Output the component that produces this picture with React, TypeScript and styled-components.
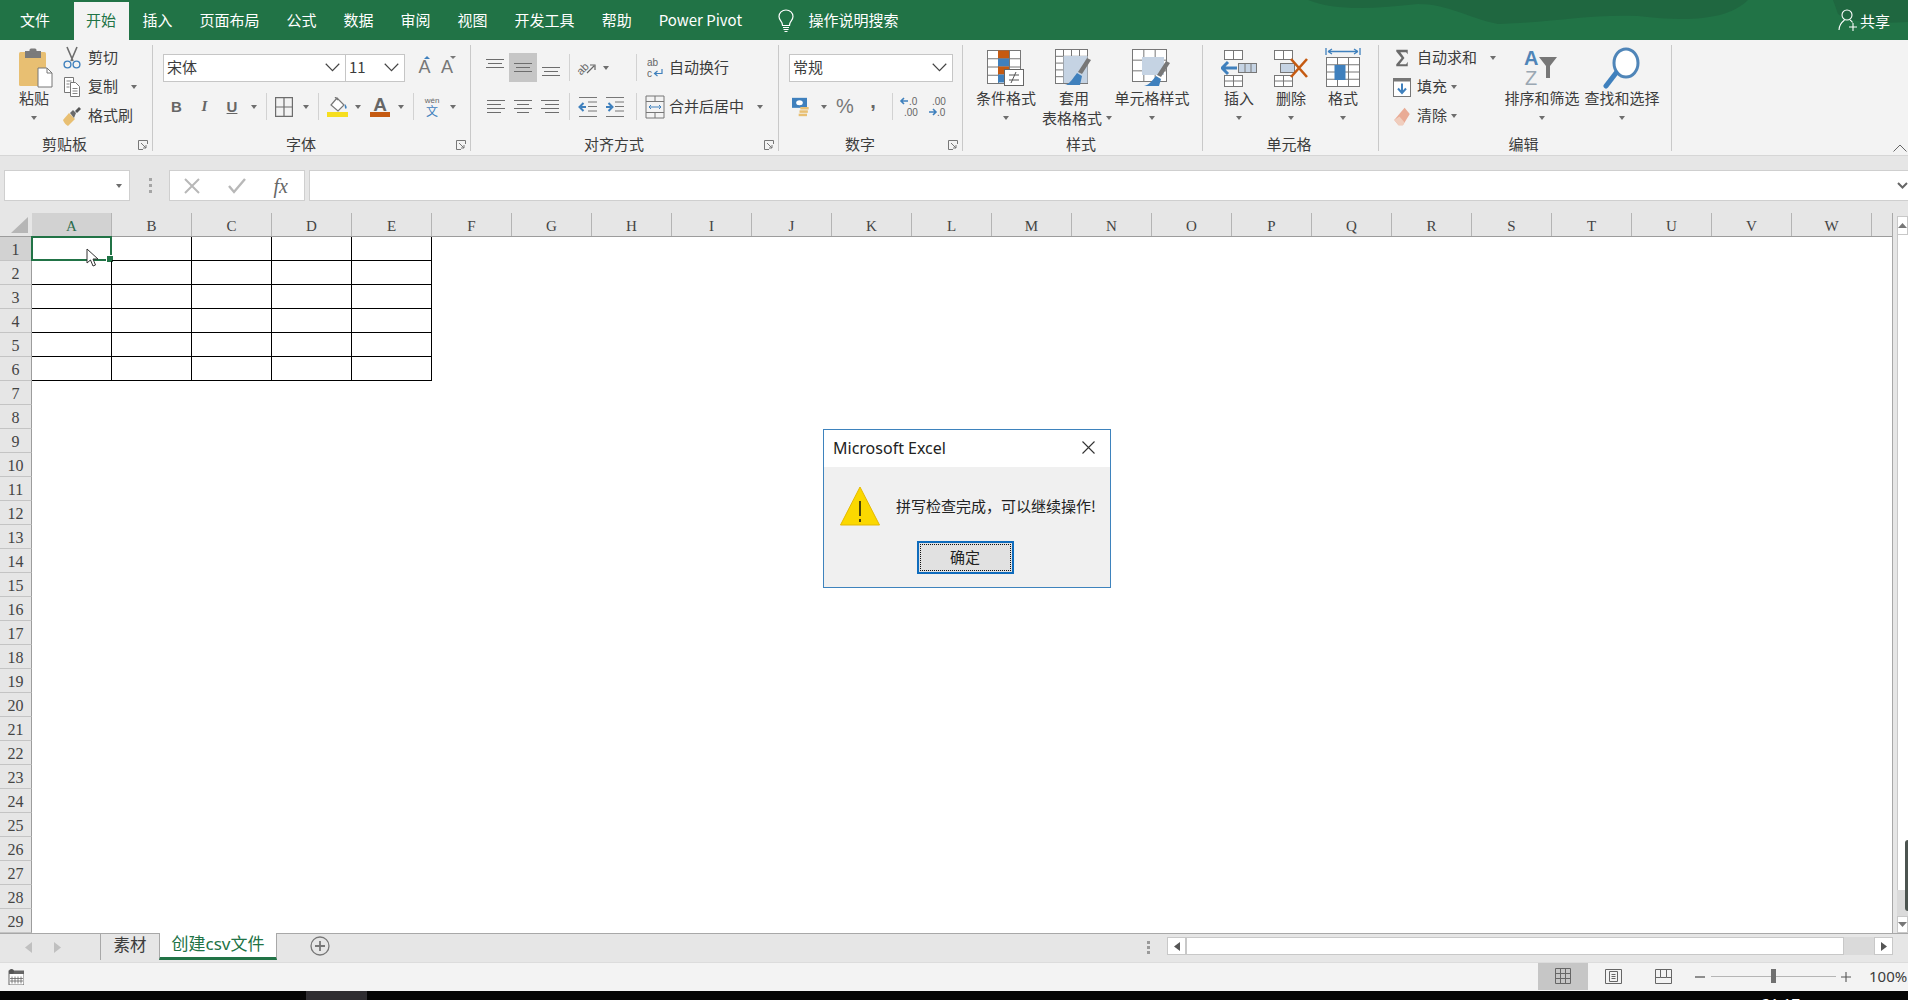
import React from "react";
import styled, { createGlobalStyle } from "styled-components";

const GlobalStyle = createGlobalStyle`
  html, body { margin: 0; padding: 0; background: #fff; }
  body { font-family: "Noto Sans", "Noto Sans CJK SC", sans-serif; overflow: hidden; }
  * { box-sizing: border-box; }
`;

const COLUMNS = "ABCDEFGHIJKLMNOPQRSTUVW".split("");
const ROWS = Array.from({ length: 29 }, (_, i) => i + 1);
const TABS = ["插入", "页面布局", "公式", "数据", "审阅", "视图", "开发工具", "帮助", "Power Pivot"];

const TitleIcon = () => (
  <svg width="20" height="26" viewBox="0 0 20 26" fill="none" stroke="#fff" strokeWidth="1.2">
    <path d="M10 3c-4 0-7 3-7 6.5 0 2.7 1.7 4 2.8 6 .5 1 .6 2 .7 3h7c.1-1 .2-2 .7-3 1.1-2 2.8-3.3 2.8-6C17 6 14 3 10 3z" />
    <path d="M7 20.5h6M7.5 22.5h5M8.5 24.5h3" />
  </svg>
);

const ClipboardIcon = () => (
  <svg width="40" height="40" viewBox="-4 0 40 40">
    <rect x="1" y="4" width="27" height="34" rx="1.5" fill="#e8bf72" />
    <rect x="7" y="3" width="16" height="7" fill="#7b7b7b" />
    <rect x="11.5" y="0.5" width="7" height="5" rx="1.5" fill="#7b7b7b" />
    <path d="M20 20h9l5 5v14H20z" fill="#fff" stroke="#777" />
    <path d="M29 20v5h5" fill="none" stroke="#777" />
  </svg>
);

const ScissorsIcon = () => (
  <svg width="18" height="24" viewBox="0 0 18 24" fill="none">
    <path d="M4 1l6 14M14 1L8 15" stroke="#6d6d6d" strokeWidth="1.6" />
    <circle cx="4.5" cy="18.5" r="3.4" stroke="#3f80bd" strokeWidth="1.4" />
    <circle cx="13.5" cy="18.5" r="3.4" stroke="#3f80bd" strokeWidth="1.4" />
  </svg>
);

const CopyIcon = () => (
  <svg width="18" height="22" viewBox="0 0 18 22" fill="#fff" stroke="#777">
    <path d="M1.5 1.5h9v15h-9z" />
    <path d="M7.5 6.5h5l4 4v10h-9z" />
    <path d="M3.5 5h5M3.5 8h3M3.5 11h3M9.5 12.5h5M9.5 15h5M9.5 17.5h5" strokeWidth=".9" />
  </svg>
);

const BrushIcon = () => (
  <svg width="20" height="20" viewBox="0 0 20 20">
    <path d="M1 14l6-7 6 6-7 7c-2-1-4-3-5-6z" fill="#e8bf72" />
    <path d="M8 7l3-3 3 3-2 5z" fill="#6a6a6a" />
    <path d="M13 5l4-4 2 2-4 4z" fill="#555" />
  </svg>
);

const GrowIcon = ({ shrink }: { shrink?: boolean }) => (
  <GrowBox>
    <FontGlyph $size={18} $light>A</FontGlyph>
    <GrowMark $shrink={shrink} />
  </GrowBox>
);

const BorderIcon = () => (
  <svg width="18" height="20" viewBox="0 0 18 20" fill="none" stroke="#6d6d6d" strokeWidth="1.2">
    <path d="M.6.6h16.8v18.8H.6zM9 .6v18.8M.6 10h16.8" />
  </svg>
);

const FillIcon = () => (
  <svg width="22" height="20" viewBox="0 0 22 20">
    <path d="M10 1l7 7-6 6-7-6z" fill="#fff" stroke="#777" strokeWidth="1.2" />
    <path d="M8 0l3 3" stroke="#777" strokeWidth="1.2" />
    <path d="M18 7c1.500 2 2.400 3.500 1 5-1.500-.5-1.500-3-1-5z" fill="#3f80bd" />
    <rect x="0" y="15" width="21" height="5" fill="#f6de1f" />
  </svg>
);

const FontColorIcon = () => (
  <ColorStack>
    <FontGlyph $size={19} $weight={700} $line={15}>A</FontGlyph>
    <ColorBar />
  </ColorStack>
);

const WenIcon = () => (
  <WenStack>
    <WenTop>wén</WenTop>
    <WenBottom>文</WenBottom>
  </WenStack>
);

const AlignLines = ({ y, widths, align }: { y: number; widths: number[]; align?: "left" | "center" | "right" }) => (
  <svg width="20" height="24" viewBox="0 0 20 24" stroke="#6d6d6d" strokeWidth="1">
    {widths.map((w, i) => {
      const x1 = align === "left" ? 2 : align === "right" ? 18 - w : 10 - w / 2;
      return <path key={i} d={`M${x1} ${y + i * 4 + 0.5}h${w}`} />;
    })}
  </svg>
);

const OrientIcon = () => (
  <svg width="24" height="24" viewBox="0 0 24 24">
    <text x="1" y="16" transform="rotate(-45 8 12)" fontFamily="Liberation Sans" fontSize="11" fill="#666">ab</text>
    <path d="M12 17l7-7M15 9h5v5" fill="none" stroke="#666" strokeWidth="1.2" />
  </svg>
);

const IndentIcon = ({ inward }: { inward?: boolean }) => (
  <svg width="20" height="22" viewBox="0 0 20 22" stroke="#777">
    <path d="M1 1.500h18M10 6h9M10 10.500h9M10 15h9M1 20.500h18" />
    <path d={inward ? "M1 11h5M3.500 7l4 4-4 4" : "M8 11H3M5.500 7l-4 4 4 4"} fill="none" stroke="#3f80bd" strokeWidth="2" />
  </svg>
);

const WrapIcon = () => (
  <svg width="16" height="22" viewBox="0 0 16 22">
    <text x="0" y="9" fontFamily="Liberation Sans" fontSize="10" fill="#666">ab</text>
    <text x="0" y="20" fontFamily="Liberation Sans" fontSize="10" fill="#666">c</text>
    <path d="M15 12v4.500H8M10.500 14l-3 2.500 3 2.500" fill="none" stroke="#3f80bd" strokeWidth="1.2" />
  </svg>
);

const MergeIcon = () => (
  <svg width="20" height="24" viewBox="0 0 20 24" fill="none" stroke="#777">
    <path d="M1 1h18v22H1zM1 6.500h18M1 17.500h18M10 1v5.500M10 17.500V23" />
    <path d="M4 12h12M6 10l-2 2 2 2M14 10l2 2-2 2" stroke="#3f80bd" />
  </svg>
);

const CurrencyIcon = () => (
  <svg width="20" height="20" viewBox="0 0 24 24">
    <rect x="0" y="1" width="18" height="12" fill="#3f80bd" />
    <ellipse cx="9" cy="7" rx="4" ry="3" fill="#fff" />
    <rect x="10" y="12" width="10" height="3" fill="#e8bf72" />
    <rect x="9" y="16" width="10" height="3" fill="#e8bf72" />
    <rect x="8" y="20" width="10" height="3" fill="#e8bf72" />
  </svg>
);

const DecimalIcon = ({ more }: { more?: boolean }) => (
  <svg width="24" height="22" viewBox="0 0 24 22" fontFamily="Liberation Sans" fontSize="10" fill="#666">
    <text x={more ? 10 : 5} y="9">{more ? ".0" : ".00"}</text>
    <text x={more ? 5 : 10} y="20">{more ? ".00" : ".0"}</text>
    <path d={more ? "M9 5H2M5 2L2 5l3 3" : "M2 16h7M6 13l3 3-3 3"} fill="none" stroke="#3f80bd" strokeWidth="1.6" />
  </svg>
);

const GridCells = ({ x, y, w, h, cols, rows }: { x: number; y: number; w: number; h: number; cols: number; rows: number }) => (
  <g fill="#fff" stroke="#777" strokeWidth="1">
    <rect x={x + 0.5} y={y + 0.5} width={w} height={h} />
    {Array.from({ length: cols - 1 }, (_, i) => (
      <path key={i} d={`M${x + 0.5 + ((i + 1) * w) / cols} ${y}v${h}`} />
    ))}
    {Array.from({ length: rows - 1 }, (_, i) => (
      <path key={i} d={`M${x} ${y + 0.5 + ((i + 1) * h) / rows}h${w}`} />
    ))}
  </g>
);

const CondFormatIcon = () => (
  <svg width="40" height="38" viewBox="0 0 40 38">
    <GridCells x={1} y={1} w={33} h={33} cols={3} rows={4} />
    <rect x="12" y="1.500" width="11" height="8" fill="#c55a11" />
    <rect x="12" y="9.500" width="11" height="8" fill="#3f80bd" />
    <rect x="12" y="17.500" width="11" height="8" fill="#c55a11" />
    <rect x="12" y="25.500" width="11" height="8" fill="#3f80bd" />
    <rect x="18.500" y="20.500" width="19" height="16" fill="#fff" stroke="#666" />
    <path d="M23 26h10M23 31h10M30 23l-5 11" stroke="#555" fill="none" />
  </svg>
);

const TableFormatIcon = () => (
  <svg width="38" height="38" viewBox="0 0 38 38">
    <GridCells x={0} y={0} w={32} h={34} cols={4} rows={5} />
    <rect x="8.500" y="7" width="24" height="27" fill="#c5d3e3" />
    <path d="M36 11L27 25l-4-2 9-14z" fill="#777" />
    <path d="M22 24l5 3-2 9H10c5-1 8-7 12-12z" fill="#3f80bd" />
  </svg>
);

const CellStyleIcon = () => (
  <svg width="40" height="38" viewBox="0 0 40 38">
    <GridCells x={0} y={0} w={34} h={32} cols={3} rows={3} />
    <rect x="10" y="8" width="22" height="18" fill="#c5d3e3" />
    <path d="M38 14l-9 14-4-2 9-14z" fill="#777" />
    <path d="M24 27l5 3-2 7H12c5-1 8-5 12-10z" fill="#3f80bd" />
  </svg>
);

const InsertIcon = () => (
  <svg width="36" height="38" viewBox="0 0 36 38">
    <GridCells x={3} y={1} w={18} h={9} cols={2} rows={1} />
    <GridCells x={3} y={26} w={18} h={11} cols={2} rows={2} />
    <rect x="17.500" y="14.500" width="18" height="9" fill="#c5d3e3" stroke="#777" />
    <path d="M24 14.500v9M30 14.500v9" stroke="#777" />
    <path d="M16 19H2M7 13l-6 6 6 6" fill="none" stroke="#3f80bd" strokeWidth="3" />
  </svg>
);

const DeleteIcon = () => (
  <svg width="36" height="38" viewBox="0 0 36 38">
    <GridCells x={1} y={1} w={18} h={9} cols={2} rows={1} />
    <GridCells x={1} y={26} w={18} h={11} cols={2} rows={2} />
    <rect x="7.500" y="14.500" width="14" height="9" fill="#c5d3e3" stroke="#777" />
    <path d="M18 10l16 18M34 10L18 28" stroke="#c55a11" strokeWidth="2.600" />
  </svg>
);

const FormatIcon = () => (
  <svg width="36" height="40" viewBox="0 0 36 40">
    <path d="M1 0v7M35 0v7M3 3.500h30M3 3.500l4-2.500M3 3.500l4 2.500M33 3.500l-4-2.500M33 3.500l-4 2.500" stroke="#3f80bd" strokeWidth="1.300" fill="none" />
    <GridCells x={1} y={9} w={33} h={29} cols={3} rows={4} />
    <rect x="9.500" y="17" width="11" height="15" fill="#3f80bd" />
  </svg>
);

const SumIcon = () => (
  <svg width="16" height="18" viewBox="0 0 16 22">
    <path d="M1 1h14v5.500L13 4H6l5 7-6 7.500h8l2-3V21H1v-2.500L7.500 11 1 3z" fill="#6a6a6a" />
  </svg>
);

const FillDownIcon = () => (
  <svg width="18" height="19" viewBox="0 0 18 19">
    <rect x=".5" y=".5" width="17" height="18" fill="#fff" stroke="#777" />
    <rect x=".5" y=".5" width="17" height="3" fill="#777" />
    <path d="M9 5.500v9M5 10.500l4 4.500 4-4.500" fill="none" stroke="#3f80bd" strokeWidth="2" />
  </svg>
);

const EraserIcon = () => (
  <svg width="18" height="19" viewBox="0 0 20 22">
    <path d="M13 1l6 7-8 13H6L1 15z" fill="#e9ab95" />
    <path d="M1 15l5 6h5l2-3-6-7z" fill="#f0cdbd" />
  </svg>
);

const SortIcon = () => (
  <svg width="38" height="42" viewBox="0 0 38 42">
    <text x="1" y="18" fontFamily="Liberation Sans" fontWeight="700" fontSize="20" fill="#4f85b8">A</text>
    <text x="2" y="38" fontFamily="Liberation Sans" fontSize="20" fill="#9aa7b2">Z</text>
    <path d="M16 10h18l-7 9v12h-4V19z" fill="#777" />
  </svg>
);

const FindIcon = () => (
  <svg width="38" height="42" viewBox="0 0 38 42">
    <ellipse cx="23" cy="16" rx="12" ry="14" fill="#fff" stroke="#4f85b8" strokeWidth="3" />
    <path d="M13 26L3 39" stroke="#3f80bd" strokeWidth="5" strokeLinecap="round" />
  </svg>
);

const Chevron = ({ size = 15 }: { size?: number }) => (
  <svg width={size} height={size / 1.7} viewBox="0 0 15 9" fill="none" stroke="#444" strokeWidth="1.200">
    <path d="M.6.8l6.900 7 6.900-7" />
  </svg>
);

const Launcher = () => (
  <LauncherBox>
    <svg width="10" height="10" viewBox="0 0 10 10" fill="none" stroke="#777">
      <path d="M9.500 4V.5H.5v9H5M3 3l5 5M8 5v3H5" />
    </svg>
  </LauncherBox>
);

const PersonIcon = () => (
  <svg width="20" height="24" viewBox="0 0 20 24" fill="none" stroke="#fff" strokeWidth="1.100">
    <circle cx="9" cy="7" r="5" />
    <path d="M1 22c0-5 3-8 5.500-10M12 12c1 .5 2 1.500 2.500 2.500M15 15v8M11 19h8" />
  </svg>
);

const DialogWarning = () => (
  <svg width="40" height="40" viewBox="0 0 40 40">
    <path d="M20 1l19.500 38H.5z" fill="#fbd800" stroke="#e4b900" />
    <path d="M20 15v15M20 33v3" stroke="#111" strokeWidth="1.500" />
  </svg>
);

const Pointer = () => (
  <svg width="14" height="20" viewBox="0 0 14 20" fill="#fff" stroke="#333">
    <path d="M1 1v14l3.500-3 2.500 6 2.500-1-2.500-6H12z" />
  </svg>
);

const App = () => {
  return (
    <Page>
      <GlobalStyle />
      <TitleBar>
        <Decor width="600" height="24" viewBox="0 0 600 24">
          <path d="M0 0c30 12 70 8 110 4 30 0 50 14 80 20 60-2 90-10 140-8 50 6 90 4 110-16zM525 0h75v22c-30 2-60 0-70-8z" fill="#1f6740" />
        </Decor>
        <FileTab>文件</FileTab>
        <ActiveTab>开始</ActiveTab>
        {TABS.map((tab) => (
          <Tab key={tab}>{tab}</Tab>
        ))}
        <SearchHint>
          <TitleIcon />
          <span>操作说明搜索</span>
        </SearchHint>
        <Share>
          <PersonIcon />
          <span>共享</span>
        </Share>
      </TitleBar>

      <Ribbon>
        <Group $w={153}>
          <GroupBody>
            <BigButton $w={42} $ml={13}>
              <BigIcon><ClipboardIcon /></BigIcon>
              <BigLabel>粘贴</BigLabel>
              <Caret />
            </BigButton>
            <SmallColumn $w={98}>
              <SmallRow><Slot $w={33}><ScissorsIcon /></Slot><RowText>剪切</RowText></SmallRow>
              <SmallRow><Slot $w={33}><CopyIcon /></Slot><RowText>复制</RowText><Slot $w={8} $ml={12}><Caret /></Slot></SmallRow>
              <SmallRow><Slot $w={33}><BrushIcon /></Slot><RowText>格式刷</RowText></SmallRow>
            </SmallColumn>
          </GroupBody>
          <GroupLabel $pr={24}>剪贴板<Launcher /></GroupLabel>
        </Group>

        <Group $w={318}>
          <StackBody $pl={10}>
            <ToolRow>
              <SelectBox $w={183}><SelectText>宋体</SelectText><Chevron /></SelectBox>
              <SelectBox $w={59} $flush><SelectText>11</SelectText><Chevron /></SelectBox>
              <Slot $w={21} $ml={9}><GrowIcon /></Slot>
              <Slot $w={22} $ml={1}><GrowIcon shrink /></Slot>
            </ToolRow>
            <ToolRow>
              <Slot $w={27}><FontGlyph $size={15} $weight={700}>B</FontGlyph></Slot>
              <Slot $w={29}><FontGlyph $size={15} $italic $serif>I</FontGlyph></Slot>
              <Slot $w={26}><FontGlyph $size={15} $underline>U</FontGlyph></Slot>
              <Slot $w={18}><Caret /></Slot>
              <Slot $w={6}><Divider /></Slot>
              <Slot $w={30}><BorderIcon /></Slot>
              <Slot $w={14}><Caret /></Slot>
              <Slot $w={10}><Divider /></Slot>
              <Slot $w={30}><FillIcon /></Slot>
              <Slot $w={10}><Caret /></Slot>
              <Slot $w={34}><FontColorIcon /></Slot>
              <Slot $w={8}><Caret /></Slot>
              <Slot $w={16}><Divider /></Slot>
              <Slot $w={22}><WenIcon /></Slot>
              <Slot $w={20}><Caret /></Slot>
            </ToolRow>
          </StackBody>
          <GroupLabel $pr={22}>字体<Launcher /></GroupLabel>
        </Group>

        <Group $w={308}>
          <StackBody $pl={10}>
            <ToolRow>
              <Slot $w={28}><AlignLines y={3} widths={[18, 14, 18]} /></Slot>
              <PressedSlot $w={28}><AlignLines y={7} widths={[18, 14, 18]} /></PressedSlot>
              <Slot $w={28}><AlignLines y={11} widths={[18, 14, 18]} /></Slot>
              <Slot $w={8}><Divider /></Slot>
              <Slot $w={28}><OrientIcon /></Slot>
              <Slot $w={10}><Caret /></Slot>
              <Slot $w={6} $ml={22}><Divider /></Slot>
              <Slot $w={20} $ml={6}><WrapIcon /></Slot>
              <RowText $ml={4}>自动换行</RowText>
            </ToolRow>
            <ToolRow>
              <Slot $w={28}><AlignLines y={5} widths={[18, 14, 18, 14]} align="left" /></Slot>
              <Slot $w={28}><AlignLines y={5} widths={[18, 12, 18, 12]} /></Slot>
              <Slot $w={28}><AlignLines y={5} widths={[18, 14, 18, 14]} align="right" /></Slot>
              <Slot $w={8}><Divider /></Slot>
              <Slot $w={30}><IndentIcon /></Slot>
              <Slot $w={24}><IndentIcon inward /></Slot>
              <Slot $w={6} $ml={6}><Divider /></Slot>
              <Slot $w={20} $ml={6}><MergeIcon /></Slot>
              <RowText $ml={4}>合并后居中</RowText>
              <Slot $w={8} $ml={12}><Caret /></Slot>
            </ToolRow>
          </StackBody>
          <GroupLabel $pr={22}>对齐方式<Launcher /></GroupLabel>
        </Group>

        <Group $w={184}>
          <StackBody $pl={10}>
            <ToolRow>
              <SelectBox $w={164}><SelectText>常规</SelectText><Chevron /></SelectBox>
            </ToolRow>
            <ToolRow>
              <Slot $w={26}><CurrencyIcon /></Slot>
              <Slot $w={18}><Caret /></Slot>
              <Slot $w={24}><FontGlyph $size={20} $light>%</FontGlyph></Slot>
              <Slot $w={32}><FontGlyph $size={20} $weight={700} $pb={10}>,</FontGlyph></Slot>
              <Slot $w={6}><Divider /></Slot>
              <Slot $w={32}><DecimalIcon more /></Slot>
              <Slot $w={22}><DecimalIcon /></Slot>
            </ToolRow>
          </StackBody>
          <GroupLabel $pr={22}>数字<Launcher /></GroupLabel>
        </Group>

        <Group $w={240}>
          <GroupBody>
            <BigButton $w={70} $ml={8}>
              <BigIcon><CondFormatIcon /></BigIcon>
              <BigLabel>条件格式</BigLabel>
              <Caret />
            </BigButton>
            <BigButton $w={66}>
              <BigIcon><TableFormatIcon /></BigIcon>
              <BigLabel>套用</BigLabel>
              <SecondLine>表格格式<Caret /></SecondLine>
            </BigButton>
            <BigButton $w={90}>
              <BigIcon><CellStyleIcon /></BigIcon>
              <BigLabel>单元格样式</BigLabel>
              <Caret />
            </BigButton>
          </GroupBody>
          <GroupLabel $pr={4}>样式</GroupLabel>
        </Group>

        <Group $w={176}>
          <GroupBody>
            <BigButton $w={52} $ml={10}>
              <BigIcon><InsertIcon /></BigIcon>
              <BigLabel>插入</BigLabel>
              <Caret />
            </BigButton>
            <BigButton $w={52}>
              <BigIcon><DeleteIcon /></BigIcon>
              <BigLabel>删除</BigLabel>
              <Caret />
            </BigButton>
            <BigButton $w={52}>
              <BigIcon><FormatIcon /></BigIcon>
              <BigLabel>格式</BigLabel>
              <Caret />
            </BigButton>
          </GroupBody>
          <GroupLabel $pr={4}>单元格</GroupLabel>
        </Group>

        <Group $w={293}>
          <GroupBody>
            <SmallColumn $w={125} $pl={10}>
              <SmallRow><Slot $w={26}><SumIcon /></Slot><RowText $ml={2}>自动求和</RowText><Slot $w={8} $ml={12}><Caret /></Slot></SmallRow>
              <SmallRow><Slot $w={26}><FillDownIcon /></Slot><RowText $ml={2}>填充</RowText><Slot $w={8} $ml={3}><Caret /></Slot></SmallRow>
              <SmallRow><Slot $w={26}><EraserIcon /></Slot><RowText $ml={2}>清除</RowText><Slot $w={8} $ml={3}><Caret /></Slot></SmallRow>
            </SmallColumn>
            <BigButton $w={76}>
              <BigIcon><SortIcon /></BigIcon>
              <BigLabel>排序和筛选</BigLabel>
              <Caret />
            </BigButton>
            <BigButton $w={80} $ml={2}>
              <BigIcon><FindIcon /></BigIcon>
              <BigLabel>查找和选择</BigLabel>
              <Caret />
            </BigButton>
          </GroupBody>
          <GroupLabel $pr={4}>编辑</GroupLabel>
        </Group>

        <Collapse>
          <svg width="14" height="8" viewBox="0 0 14 8" fill="none" stroke="#666"><path d="M.5 7.500L7 1l6.500 6.500" /></svg>
        </Collapse>
      </Ribbon>

      <FormulaBar>
        <NameBox><Caret /></NameBox>
        <Grip />
        <FormulaTools>
          <svg width="16" height="16" viewBox="0 0 16 16" stroke="#b8b8b8" strokeWidth="2"><path d="M1 1l14 14M15 1L1 15" /></svg>
          <svg width="18" height="16" viewBox="0 0 18 16" fill="none" stroke="#b8b8b8" strokeWidth="2.400"><path d="M1 8l5 6L17 1" /></svg>
          <FxLabel>fx</FxLabel>
        </FormulaTools>
        <FormulaInput>
          <svg width="11" height="7" viewBox="0 0 11 7" fill="none" stroke="#666" strokeWidth="2"><path d="M1 1l4.500 4.500L10 1" /></svg>
        </FormulaInput>
      </FormulaBar>

      <SheetArea>
        <SheetMain>
          <HeaderRow>
            <Corner>
              <svg width="18" height="16" viewBox="0 0 18 16"><path d="M17 0v16H0z" fill="#b6b6b6" /></svg>
            </Corner>
            {COLUMNS.map((col, i) => (
              <ColHead key={col} $active={i === 0}>{col}</ColHead>
            ))}
          </HeaderRow>
          {ROWS.map((row) => (
            <Row key={row}>
              <RowHead $active={row === 1}>{row}</RowHead>
              {row <= 6 &&
                COLUMNS.slice(0, 5).map((col) => (
                  <Cell key={col}>
                    {row === 1 && col === "A" && (
                      <>
                        <Selection />
                        <MousePointer><Pointer /></MousePointer>
                      </>
                    )}
                  </Cell>
                ))}
            </Row>
          ))}
        </SheetMain>
        <VScroll>
          <ScrollArrow $up><svg width="9" height="5" viewBox="0 0 9 5"><path d="M0 5l4.500-5L9 5z" fill="#777" /></svg></ScrollArrow>
          <VThumb />
          <VTrack />
          <ScrollArrow><svg width="9" height="5" viewBox="0 0 9 5"><path d="M0 0l4.500 5L9 0z" fill="#777" /></svg></ScrollArrow>
          <VEdge />
        </VScroll>
      </SheetArea>

      <TabBar>
        <NavArrows>
          <svg width="7" height="11" viewBox="0 0 7 11"><path d="M7 0L0 5.500 7 11z" fill="#c0c0c0" /></svg>
          <svg width="7" height="11" viewBox="0 0 7 11"><path d="M0 0l7 5.500L0 11z" fill="#c0c0c0" /></svg>
        </NavArrows>
        <SheetTab>素材</SheetTab>
        <ActiveSheetTab>创建csv文件</ActiveSheetTab>
        <AddSheet>
          <svg width="20" height="20" viewBox="0 0 20 20" fill="none" stroke="#777" strokeWidth="1.300">
            <circle cx="10" cy="10" r="9" />
            <path d="M10 5v10M5 10h10" strokeWidth="1.800" />
          </svg>
        </AddSheet>
        <BarGrip />
        <HScroll>
          <HArrow><svg width="6" height="9" viewBox="0 0 6 9"><path d="M6 0L0 4.500 6 9z" fill="#555" /></svg></HArrow>
          <HThumb />
          <HTrack />
          <HArrow><svg width="6" height="9" viewBox="0 0 6 9"><path d="M0 0l6 4.500L0 9z" fill="#555" /></svg></HArrow>
        </HScroll>
      </TabBar>

      <StatusBar>
        <MacroIcon>
          <svg width="16" height="16" viewBox="0 0 16 16">
            <rect x="1" y="2" width="15" height="14" fill="#fff" stroke="#666" />
            <rect x="1" y="2" width="15" height="3" fill="#666" />
            <path d="M4 7.500v7M7 7.500v7M10 7.500v7M13 7.500v7M2 9.500h13M2 12h13" stroke="#666" strokeWidth=".8" />
            <circle cx="3.500" cy="2.500" r="2.500" fill="#555" />
          </svg>
        </MacroIcon>
        <ViewButton $active>
          <svg width="16" height="16" viewBox="0 0 16 16" fill="none" stroke="#666"><path d="M.5.5h15v15H.5zM5.500.5v15M10.500.5v15M.5 5.500h15M.5 10.500h15" /></svg>
        </ViewButton>
        <ViewButton>
          <svg width="17" height="15" viewBox="0 0 17 15" fill="none" stroke="#666"><path d="M.5.5h16v14H.5zM4.500 2.500h8v10h-8zM6.500 5.500h4M6.500 7.500h4M6.500 9.500h4" /></svg>
        </ViewButton>
        <ViewButton>
          <svg width="17" height="15" viewBox="0 0 17 15" fill="none" stroke="#666"><path d="M.5.5h16v14H.5zM5.500.5v8h6v-8M.5 8.500h5M11.500 8.500h5" /></svg>
        </ViewButton>
        <ZoomSign $ml={7}>
          <svg width="10" height="10" viewBox="0 0 10 10" stroke="#555" strokeWidth="1.300"><path d="M0 5h10" /></svg>
        </ZoomSign>
        <ZoomTrack><ZoomThumb /></ZoomTrack>
        <ZoomSign $ml={5}>
          <svg width="10" height="10" viewBox="0 0 10 10" stroke="#555" strokeWidth="1.100"><path d="M0 5h10M5 0v10" /></svg>
        </ZoomSign>
        <ZoomValue>100%</ZoomValue>
      </StatusBar>

      <Taskbar>
        <TaskButton />
        <Clock>21:17</Clock>
      </Taskbar>

      <Dialog>
        <DialogTitle>
          <span>Microsoft Excel</span>
          <svg width="13" height="13" viewBox="0 0 13 13" stroke="#333" strokeWidth="1.100"><path d="M.5.5l12 12M12.500.5l-12 12" /></svg>
        </DialogTitle>
        <DialogBody>
          <DialogMessage>
            <DialogWarning />
            <span>拼写检查完成，可以继续操作!</span>
          </DialogMessage>
          <OkButton><OkInner>确定</OkInner></OkButton>
        </DialogBody>
      </Dialog>
    </Page>
  );
};

const Page = styled.div`
  position: relative;
  display: flex;
  flex-direction: column;
  width: 1908px;
  height: 1000px;
  overflow: hidden;
  color: #3c3c3c;
`;

const TitleBar = styled.header`
  position: relative;
  display: flex;
  flex: 0 0 40px;
  align-items: flex-end;
  background: #217346;
  color: #fff;
  font-size: 15px;
  font-family: "Noto Sans CJK SC", "Noto Sans", sans-serif;
`;

const Decor = styled.svg`
  position: absolute;
  top: 0;
  left: 1308px;
`;

const Tab = styled.div`
  position: relative;
  display: flex;
  align-items: center;
  height: 38px;
  padding: 0 13.5px 3px;
  white-space: nowrap;
  font: 15px "Noto Sans CJK SC", sans-serif;

  &:last-of-type {
    font: 16px "Noto Sans", sans-serif;
  }
`;

const FileTab = styled(Tab)`
  width: 74px;
  padding: 0 0 3px 20px;
`;

const ActiveTab = styled(Tab)`
  padding: 0 13px 3px 12px;
  background: #f3f3f3;
  color: #217346;
`;

const SearchHint = styled.div`
  position: relative;
  display: flex;
  align-items: center;
  height: 38px;
  gap: 13px;
  margin-left: 20px;
  padding-bottom: 3px;
`;

const Share = styled.div`
  position: relative;
  display: flex;
  align-items: center;
  height: 38px;
  gap: 2px;
  margin-left: auto;
  padding: 0 18px 2px 0;
`;

const Ribbon = styled.section`
  display: flex;
  flex: 0 0 116px;
  background: #f3f3f3;
  border-bottom: 1px solid #d6d6d6;
`;

const Group = styled.div<{ $w: number }>`
  position: relative;
  display: flex;
  flex: 0 0 ${({ $w }) => $w}px;
  flex-direction: column;
  min-width: 0;
  height: 115px;

  &::after {
    content: "";
    position: absolute;
    top: 5px;
    right: 0;
    bottom: 4px;
    width: 1px;
    background: #c9c9c9;
  }
`;

const GroupBody = styled.div`
  display: flex;
  height: 94px;
`;

const StackBody = styled.div<{ $pl: number }>`
  display: flex;
  flex-direction: column;
  gap: 10px;
  height: 94px;
  padding-top: 13px;
  padding-left: ${({ $pl }) => $pl}px;
`;

const GroupLabel = styled.div<{ $pr: number }>`
  position: relative;
  height: 22px;
  padding-right: ${({ $pr }) => $pr}px;
  text-align: center;
  font: 15px/22px "Noto Sans CJK SC", sans-serif;
`;

const LauncherBox = styled.span`
  position: absolute;
  top: 7px;
  right: 5px;
  display: flex;
`;

const BigButton = styled.div<{ $w: number; $ml?: number }>`
  display: flex;
  flex: 0 0 ${({ $w }) => $w}px;
  flex-direction: column;
  align-items: center;
  min-width: 0;
  margin-left: ${({ $ml }) => $ml ?? 0}px;
  padding-top: 8px;
`;

const BigIcon = styled.div`
  display: flex;
  align-items: center;
  justify-content: center;
  height: 40px;
`;

const BigLabel = styled.div`
  height: 20px;
  margin-bottom: 8px;
  white-space: nowrap;
  font: 15px/20px "Noto Sans CJK SC", sans-serif;
`;

const SecondLine = styled.div`
  display: flex;
  align-items: center;
  gap: 4px;
  margin-top: -8px;
  margin-left: 6px;
  white-space: nowrap;
  font: 15px/20px "Noto Sans CJK SC", sans-serif;
`;

const Caret = styled.span`
  display: inline-block;
  flex: none;
  width: 0;
  height: 0;
  border-left: 3.5px solid transparent;
  border-right: 3.5px solid transparent;
  border-top: 4px solid #6d6d6d;
`;

const SmallColumn = styled.div<{ $w: number; $pl?: number }>`
  flex: 0 0 ${({ $w }) => $w}px;
  padding-top: 3.5px;
  padding-left: ${({ $pl }) => $pl ?? 0}px;
`;

const SmallRow = styled.div`
  display: flex;
  align-items: center;
  height: 29px;
`;

const Slot = styled.span<{ $w: number; $ml?: number }>`
  display: inline-flex;
  flex: 0 0 ${({ $w }) => $w}px;
  align-items: center;
  justify-content: center;
  height: 29px;
  margin-left: ${({ $ml }) => $ml ?? 0}px;
`;

const PressedSlot = styled(Slot)`
  background: #c6c6c6;
`;

const RowText = styled.span<{ $ml?: number }>`
  margin-left: ${({ $ml }) => $ml ?? 0}px;
  padding-bottom: 2px;
  white-space: nowrap;
  font: 15px/20px "Noto Sans CJK SC", sans-serif;
`;

const ToolRow = styled.div`
  display: flex;
  align-items: center;
  height: 29px;
`;

const Divider = styled.span`
  width: 1px;
  height: 27px;
  background: #d2d2d2;
`;

const SelectBox = styled.div<{ $w: number; $flush?: boolean }>`
  display: flex;
  flex: 0 0 ${({ $w }) => $w}px;
  align-items: center;
  justify-content: space-between;
  height: 28px;
  padding: 0 5px 0 3px;
  background: #fff;
  border: 1px solid #c6c6c6;
  border-left-width: ${({ $flush }) => ($flush ? 0 : 1)}px;
`;

const SelectText = styled.span`
  padding-bottom: 2px;
  font: 15px/20px "Noto Sans CJK SC", sans-serif;
`;

const FontGlyph = styled.span<{ $weight?: number; $italic?: boolean; $serif?: boolean; $underline?: boolean; $size?: number; $light?: boolean; $line?: number; $pb?: number }>`
  padding-bottom: ${({ $pb }) => $pb ?? 0}px;
  color: ${({ $light }) => ($light ? "#777" : "#666")};
  font-family: ${({ $serif }) => ($serif ? '"Liberation Serif"' : '"Liberation Sans"')}, sans-serif;
  font-size: ${({ $size }) => $size ?? 16}px;
  font-style: ${({ $italic }) => ($italic ? "italic" : "normal")};
  font-weight: ${({ $weight, $italic, $underline }) => ($italic || $underline ? 700 : $weight ?? 400)};
  line-height: ${({ $line }) => ($line ? `${$line}px` : "normal")};
  text-decoration: ${({ $underline }) => ($underline ? "underline" : "none")};
`;

const GrowBox = styled.span`
  position: relative;
  display: inline-flex;
`;

const GrowMark = styled.i<{ $shrink?: boolean }>`
  position: absolute;
  top: -1px;
  right: ${({ $shrink }) => ($shrink ? -3 : 1)}px;
  width: 0;
  height: 0;
  border-left: 3px solid transparent;
  border-right: 3px solid transparent;
  border-top: ${({ $shrink }) => ($shrink ? "3px solid #777" : "0")};
  border-bottom: ${({ $shrink }) => ($shrink ? "0" : "3px solid #3f80bd")};
`;

const ColorStack = styled.span`
  display: inline-flex;
  flex-direction: column;
  align-items: center;
  width: 20px;
`;

const ColorBar = styled.i`
  width: 20px;
  height: 5px;
  background: #c55a11;
`;

const WenStack = styled.span`
  display: inline-flex;
  flex-direction: column;
  align-items: center;
`;

const WenTop = styled.span`
  color: #666;
  font: 8px/8px "Liberation Sans", sans-serif;
`;

const WenBottom = styled.span`
  color: #3f80bd;
  font: 12px/12px "Noto Sans CJK SC", sans-serif;
`;

const Collapse = styled.div`
  display: flex;
  align-self: flex-end;
  margin-left: auto;
  margin-right: 1px;
  padding-bottom: 3px;
`;

const FormulaBar = styled.section`
  display: flex;
  flex: 0 0 57px;
  align-items: center;
  padding-top: 2px;
  background: #e6e6e6;
`;

const NameBox = styled.div`
  display: flex;
  flex: 0 0 126px;
  align-items: center;
  justify-content: flex-end;
  height: 31px;
  margin-left: 4px;
  padding-right: 7px;
  background: #fff;
  border: 1px solid #cfcfcf;
`;

const Grip = styled.span`
  flex: none;
  width: 3px;
  height: 16px;
  margin: 0 17px 0 19px;
  background: repeating-linear-gradient(to bottom, #a5a5a5 0 3px, transparent 3px 6px);
`;

const FormulaTools = styled.div`
  display: flex;
  flex: 0 0 136px;
  align-items: center;
  justify-content: space-between;
  height: 31px;
  padding: 0 16px 0 14px;
  background: #fff;
  border: 1px solid #cfcfcf;
`;

const FxLabel = styled.span`
  color: #666;
  font: italic 20px/20px "Liberation Serif", serif;
`;

const FormulaInput = styled.div`
  display: flex;
  flex: 1;
  align-items: center;
  justify-content: flex-end;
  height: 31px;
  margin-left: 4px;
  padding-right: 0;
  background: #fff;
  border: 1px solid #cfcfcf;
  border-right: 0;
`;

const SheetArea = styled.section`
  display: flex;
  flex: 0 0 719px;
  background: #e6e6e6;
`;

const SheetMain = styled.div`
  flex: 0 0 1893px;
  overflow: hidden;
  background: #fff;
  border-right: 1px solid #a8a8a8;
`;

const HeaderRow = styled.div`
  display: flex;
  height: 24px;
  background: #e6e6e6;
  border-bottom: 1px solid #9c9c9c;
`;

const Corner = styled.div`
  display: flex;
  flex: 0 0 32px;
  align-items: flex-end;
  justify-content: flex-end;
  padding: 0 3px 3px 0;
`;

const ColHead = styled.div<{ $active?: boolean }>`
  flex: 0 0 80px;
  background: ${({ $active }) => ($active ? "#d2d2d2" : "transparent")};
  border-right: 1px solid #b4b4b4;
  color: ${({ $active }) => ($active ? "#2b6b4c" : "#444")};
  text-align: center;
  font: 15px/26px "Liberation Serif", serif;
`;

const Row = styled.div`
  display: flex;
  height: 24px;
`;

const RowHead = styled.div<{ $active?: boolean }>`
  flex: 0 0 32px;
  background: ${({ $active }) => ($active ? "#d2d2d2" : "#e6e6e6")};
  border-right: 1px solid #9c9c9c;
  border-bottom: 1px solid #c4c4c4;
  color: #444;
  text-align: center;
  font: 16px/26px "Liberation Serif", serif;
`;

const Cell = styled.div`
  position: relative;
  flex: 0 0 80px;
  border-right: 1px solid #000;
  border-bottom: 1px solid #000;
`;

const Selection = styled.div`
  position: absolute;
  top: -1px;
  left: -1px;
  width: 81px;
  height: 25px;
  border: 2px solid #217346;

  &::after {
    content: "";
    position: absolute;
    right: -4px;
    bottom: -4px;
    width: 6px;
    height: 6px;
    background: #217346;
    border: 1px solid #fff;
  }
`;

const MousePointer = styled.div`
  position: absolute;
  top: 11px;
  left: 54px;
  display: flex;
`;

const VScroll = styled.div`
  position: relative;
  display: flex;
  flex: 1;
  flex-direction: column;
  padding: 3px 0 0 4px;
`;

const ScrollArrow = styled.div<{ $up?: boolean }>`
  display: flex;
  flex: 0 0 ${({ $up }) => ($up ? 19 : 17)}px;
  align-items: center;
  justify-content: center;
  background: #fff;
  border: 1px solid #c8c8c8;
`;

const VThumb = styled.div`
  flex: 1;
  background: #fff;
  border-left: 1px solid #c8c8c8;
`;

const VTrack = styled.div`
  flex: 0 0 26px;
  background: #dadada;
`;

const VEdge = styled.div`
  position: absolute;
  top: 627px;
  right: 0;
  width: 3px;
  height: 71px;
  background: #4c5450;
  border-radius: 3px 0 0 3px;
`;

const TabBar = styled.section`
  display: flex;
  flex: 0 0 29px;
  align-items: flex-start;
  background: #e6e6e6;
  border-top: 1px solid #a8a8a8;
`;

const NavArrows = styled.div`
  display: flex;
  flex: 0 0 101px;
  gap: 22px;
  align-items: center;
  height: 26px;
  padding-left: 25px;
  border-right: 1px solid #a8a8a8;
`;

const SheetTab = styled.div`
  flex: 0 0 58px;
  height: 26px;
  text-align: center;
  font: 16.5px/21px "Noto Sans CJK SC", sans-serif;
`;

const ActiveSheetTab = styled.div`
  flex: 0 0 118px;
  height: 27px;
  background: #fff;
  border-right: 1px solid #a8a8a8;
  border-left: 1px solid #a8a8a8;
  border-bottom: 3px solid #217346;
  color: #217346;
  text-align: center;
  margin-top: -1px;
  font: 17px/22px "Noto Sans", "Noto Sans CJK SC", sans-serif;
`;

const AddSheet = styled.div`
  display: flex;
  margin: 2px 0 0 33px;
`;

const BarGrip = styled.span`
  flex: none;
  width: 3px;
  height: 13px;
  margin: 7px 17px 0 817px;
  background: repeating-linear-gradient(to bottom, #9a9a9a 0 3px, transparent 3px 5px);
`;

const HScroll = styled.div`
  display: flex;
  width: 726px;
  height: 18px;
  margin-top: 3px;
`;

const HArrow = styled.div`
  display: flex;
  flex: 0 0 19px;
  align-items: center;
  justify-content: center;
  background: #fff;
  border: 1px solid #c8c8c8;
`;

const HThumb = styled.div`
  flex: 0 0 658px;
  background: #fff;
  border: 1px solid #c8c8c8;
`;

const HTrack = styled.div`
  flex: 1;
  background: #dadada;
`;

const StatusBar = styled.footer`
  display: flex;
  flex: 0 0 28px;
  align-items: center;
  padding-bottom: 1px;
  background: #f3f3f3;
  border-top: 1px solid #dcdcdc;
`;

const MacroIcon = styled.div`
  display: flex;
  margin-left: 8px;
  margin-right: auto;
`;

const ViewButton = styled.div<{ $active?: boolean }>`
  display: flex;
  flex: 0 0 50px;
  align-items: center;
  justify-content: center;
  align-self: flex-start;
  height: 27px;
  padding-bottom: 1px;
  background: ${({ $active }) => ($active ? "#c6c6c6" : "transparent")};
`;

const ZoomSign = styled.div<{ $ml: number }>`
  display: flex;
  margin-left: ${({ $ml }) => $ml}px;
`;

const ZoomTrack = styled.div`
  position: relative;
  width: 125px;
  height: 1px;
  margin-left: 6px;
  background: #b5b5b5;
`;

const ZoomThumb = styled.span`
  position: absolute;
  top: -7px;
  left: 60px;
  width: 5px;
  height: 14px;
  background: #707070;
`;

const ZoomValue = styled.div`
  flex: 0 0 39px;
  margin-left: 18px;
  padding-bottom: 2px;
  white-space: nowrap;
  font-size: 15px;
  line-height: 20px;
`;

const Taskbar = styled.div`
  display: flex;
  flex: 0 0 11px;
  overflow: hidden;
  background: #050505;
`;

const TaskButton = styled.div`
  flex: 0 0 61px;
  margin-left: 306px;
  background: #2f2d31;
`;

const Clock = styled.div`
  margin: 3px 108px 0 auto;
  color: #fff;
  font-size: 15px;
  line-height: 18px;
`;

const Dialog = styled.div`
  position: absolute;
  top: 429px;
  left: 823px;
  display: flex;
  flex-direction: column;
  width: 288px;
  height: 159px;
  background: #f0f0f0;
  border: 1px solid #3e83bd;
`;

const DialogTitle = styled.div`
  display: flex;
  flex: 0 0 37px;
  align-items: center;
  justify-content: space-between;
  padding: 0 15px 2px 9px;
  background: #fff;
  color: #222;
  font-size: 16px;
`;

const DialogBody = styled.div`
  display: flex;
  flex: 1;
  flex-direction: column;
  align-items: center;
`;

const DialogMessage = styled.div`
  display: flex;
  align-self: flex-start;
  align-items: center;
  gap: 16px;
  margin: 19px 0 0 16px;
  color: #222;
  font: 15px/20px "Noto Sans CJK SC", sans-serif;
  white-space: nowrap;
`;

const OkButton = styled.div`
  width: 97px;
  height: 33px;
  margin: 15px 0 0 -4px;
  padding: 1px;
  background: #e1e1e1;
  border: 2px solid #0f6cbd;
`;

const OkInner = styled.div`
  height: 100%;
  border: 1px dotted #111;
  color: #222;
  text-align: center;
  font: 15px/23px "Noto Sans CJK SC", sans-serif;
`;

export default App;
